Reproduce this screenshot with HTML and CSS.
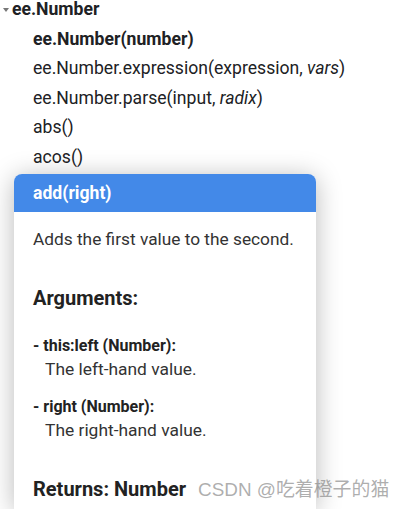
FILE: index.html
```html
<!DOCTYPE html>
<html>
<head>
<meta charset="utf-8">
<link rel="stylesheet" href="styles.css">
</head>
<body>
<div class="tree">
  <div class="node"><span class="caret"></span><span class="bold">ee.Number</span></div>
  <div class="item bold">ee.Number(number)</div>
  <div class="item">ee.Number.expression(expression, <i>vars</i>)</div>
  <div class="item">ee.Number.parse(input, <i>radix</i>)</div>
  <div class="item">abs()</div>
  <div class="item">acos()</div>
</div>
<div class="card">
  <div class="card-head">add(right)</div>
  <div class="card-body">
    <div class="desc">Adds the first value to the second.</div>
    <div class="heading">Arguments:</div>
    <div class="arg-label">- this:left (Number):</div>
    <div class="arg-value">The left-hand value.</div>
    <div class="arg-label second">- right (Number):</div>
    <div class="arg-value">The right-hand value.</div>
    <div class="heading returns">Returns: Number</div>
  </div>
</div>
<div class="watermark">CSDN @吃着橙子的猫</div>
</body>
</html>
```
FILE: styles.css
```css
html, body {
  margin: 0;
  padding: 0;
  background: #fff;
  overflow: hidden;
}
body {
  font-family: Roboto, "Noto Sans", sans-serif;
  color: #202124;
  width: 405px;
  height: 509px;
  position: relative;
}
.tree {
  margin-top: -5px;
  font-size: 17.6px;
  line-height: 29.6px;
}
.node {
  display: flex;
  align-items: center;
  padding-left: 3px;
}
.caret {
  width: 0;
  height: 0;
  border-left: 3.5px solid transparent;
  border-right: 3.5px solid transparent;
  border-top: 4px solid #777;
  margin-right: 3px;
  margin-top: 1px;
}
.bold { font-weight: 700; }
.item {
  padding-left: 33px;
  white-space: nowrap;
}
.card {
  margin-top: 1.4px;
  margin-left: 14px;
  width: 302px;
  height: 335px;
  overflow: hidden;
  background: #fff;
  border-radius: 8px 8px 0 0;
  box-shadow: 0 3px 26px rgba(0,0,0,0.28);
}
.card-head {
  background: #4389e8;
  color: #fff;
  font-weight: 700;
  font-size: 17.6px;
  height: 38px;
  line-height: 38px;
  padding-left: 19px;
}
.card-body {
  padding: 16px 0 0 19px;
  color: #333;
  white-space: nowrap;
}
.desc {
  font-size: 17.3px;
  line-height: 22px;
}
.heading {
  font-size: 20px;
  font-weight: 700;
  line-height: 24px;
  margin-top: 36px;
  color: #222;
}
.arg-label {
  font-size: 16px;
  font-weight: 700;
  line-height: 20px;
  margin-top: 26px;
  color: #222;
}
.arg-label.second { margin-top: 17px; }
.arg-value {
  font-size: 17.4px;
  line-height: 22px;
  margin-top: 2px;
  padding-left: 12px;
}
.returns { margin-top: 36px; }
.watermark {
  position: absolute;
  left: 198px;
  top: 479px;
  font-family: "Liberation Sans", "Noto Sans CJK SC", sans-serif;
  font-size: 18.9px;
  line-height: 22px;
  color: rgba(120,120,120,0.6);
  white-space: nowrap;
}
```
